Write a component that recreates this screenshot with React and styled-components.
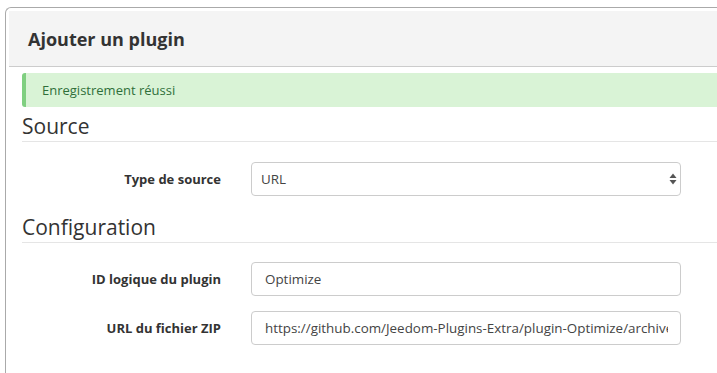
import styled, { createGlobalStyle } from 'styled-components';

const GlobalStyle = createGlobalStyle`
    html, body {
        margin: 0;
        padding: 0;
        background: #ffffff;
        overflow: hidden;
    }
    body {
        font-family: "Open Sans", "Noto Sans", sans-serif;
        color: #333;
    }
`

const Modal = styled.div`
    margin: 7px 0 0 5px;
    width: 712px;
    height: 366px;
    border: 1px solid #aaa;
    border-right: none;
    border-bottom: none;
    border-radius: 6px 0 0 0;
    padding: 3px 0 0 3px;
    box-sizing: border-box;
    background: #fff;
    overflow: hidden;
`

const Header = styled.div`
    display: flex;
    align-items: center;
    height: 55px;
    padding-left: 19px;
    background-color: #f4f4f4;
    border-bottom: 1px solid #ccc;
`

const Title = styled.h4`
    margin: 0;
    font-size: 18px;
    font-weight: 700;
    color: #333;
`

const Body = styled.div`
    padding: 6px 0 0 13px;
`

const Alert = styled.div`
    display: flex;
    align-items: center;
    height: 34px;
    padding-left: 16px;
    background-color: #d9f3d6;
    border-left: 4px solid #7fcf80;
    border-radius: 3px 0 0 3px;
    color: #2f6f3a;
    font-size: 13px;
`

const SectionTitle = styled.h3`
    margin: ${p => p.$top}px 0 0 0;
    padding-bottom: 3px;
    font-size: 21px;
    line-height: 23px;
    font-weight: 400;
    color: #333;
    border-bottom: 1px solid #e5e5e5;
`

const Form = styled.div`
    display: flex;
    flex-direction: column;
    gap: 15px;
    margin-top: ${p => p.$top}px;
`

const Row = styled.div`
    display: grid;
    grid-template-columns: 199px 430px;
    column-gap: 30px;
    align-items: center;
`

const Label = styled.label`
    text-align: right;
    font-size: 13px;
    font-weight: 700;
    color: #333;
`

const Field = styled.div`
    position: relative;
`

const Input = styled.input`
    display: block;
    width: 100%;
    height: 34px;
    box-sizing: border-box;
    padding: 0 12px 0 13px;
    border: 1px solid #ccc;
    border-radius: 4px;
    background: #fff;
    font-family: "Open Sans", "Noto Sans", sans-serif;
    font-size: 13.4px;
    color: #444;
    outline: none;
`

const Select = styled.select`
    display: block;
    width: 100%;
    height: 34px;
    box-sizing: border-box;
    padding: 0 24px 0 9px;
    border: 1px solid #ccc;
    border-radius: 4px;
    background: #fff;
    appearance: none;
    font-family: "Open Sans", "Noto Sans", sans-serif;
    font-size: 13.4px;
    color: #444;
    outline: none;
`

const Arrows = styled.svg`
    position: absolute;
    right: 4px;
    top: 11px;
    pointer-events: none;
`

function App() {
    return (
        <>
            <GlobalStyle />
            <Modal>
                <Header>
                    <Title>Ajouter un plugin</Title>
                </Header>
                <Body>
                    <Alert>Enregistrement réussi</Alert>
                    <SectionTitle $top={8}>Source</SectionTitle>
                    <Form $top={20}>
                        <Row>
                            <Label>Type de source</Label>
                            <Field>
                                <Select defaultValue="url">
                                    <option value="url">URL</option>
                                    <option value="github">Github</option>
                                    <option value="file">Fichier</option>
                                </Select>
                                <Arrows width="8" height="12" viewBox="0 0 8 12">
                                    <path d="M4 0.5 L7.5 5 L0.5 5 Z" fill="#555" />
                                    <path d="M4 11.5 L7.5 7 L0.5 7 Z" fill="#555" />
                                </Arrows>
                            </Field>
                        </Row>
                    </Form>
                    <SectionTitle $top={20}>Configuration</SectionTitle>
                    <Form $top={19}>
                        <Row>
                            <Label>ID logique du plugin</Label>
                            <Field>
                                <Input readOnly value="Optimize" />
                            </Field>
                        </Row>
                        <Row>
                            <Label>URL du fichier ZIP</Label>
                            <Field>
                                <Input readOnly value="https://github.com/Jeedom-Plugins-Extra/plugin-Optimize/archive/master.zip" />
                            </Field>
                        </Row>
                    </Form>
                </Body>
            </Modal>
        </>
    );
}

export default App
